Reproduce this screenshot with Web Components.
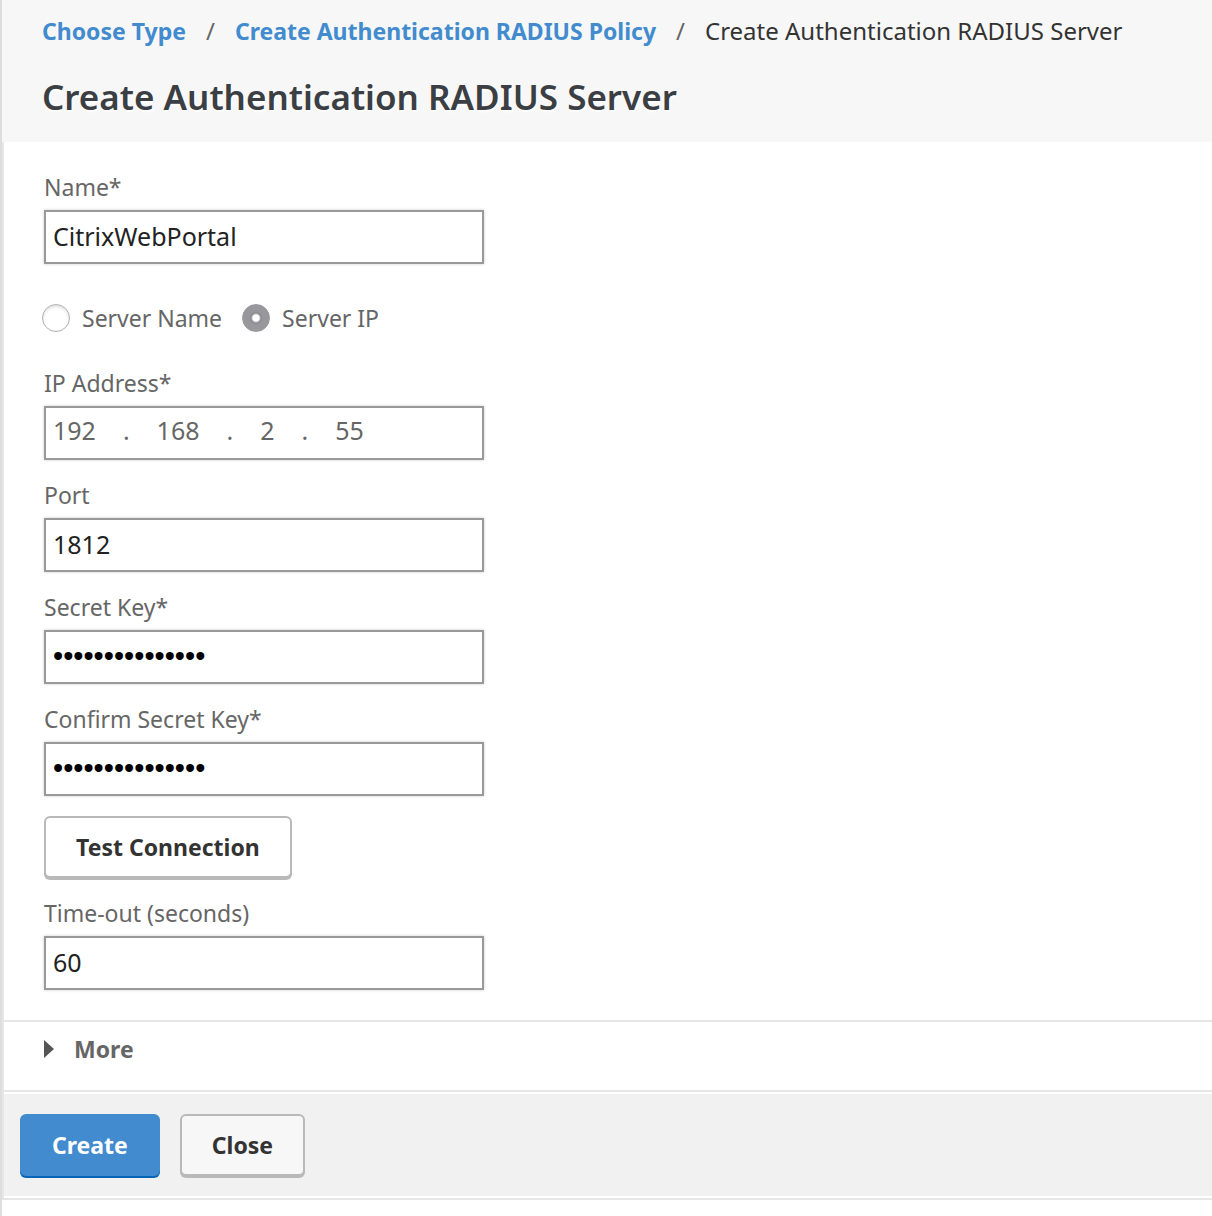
<!DOCTYPE html>
<html lang="en">
<head>
<meta charset="utf-8">
<meta name="viewport" content="width=device-width, initial-scale=1">
<title>Create Authentication RADIUS Server</title>
<style>
    body {
        margin: 0;
        background: #fff;
        color: #666;
        font: 23px/30px "Noto Sans", "Open Sans", sans-serif;
        --link: #418bce;
        --line: #e6e6e6;
        --edge: #999;
    }
</style>
</head>
<body>
<config-page>
    <page-header slot="header" heading="Create Authentication RADIUS Server">
        <a href="#type">Choose Type</a>
        <a href="#policy">Create Authentication RADIUS Policy</a>
        <span aria-current="page">Create Authentication RADIUS Server</span>
    </page-header>

    <text-field label="Name*" value="CitrixWebPortal"></text-field>
    <radio-choice name="server" options="Server Name,Server IP" value="Server IP"></radio-choice>
    <ip-field label="IP Address*" value="192.168.2.55"></ip-field>
    <text-field label="Port" value="1812"></text-field>
    <text-field label="Secret Key*" type="password" value="radiussecretkey"></text-field>
    <text-field label="Confirm Secret Key*" type="password" value="radiussecretkey"></text-field>
    <push-button>Test Connection</push-button>
    <text-field label="Time-out (seconds)" value="60"></text-field>

    <more-toggle slot="more">More</more-toggle>

    <push-button slot="actions" kind="primary">Create</push-button>
    <push-button slot="actions" kind="muted">Close</push-button>
</config-page>

<script>
    const controlStyles = `
        :host {
            display: block;
        }

        .label {
            display: block;
            margin-bottom: 8px;
        }

        .box {
            box-sizing: border-box;
            width: 100%;
            max-width: 440px;
            height: 54px;
            padding: 0 7px 2px;
            border: 2px solid var(--edge);
            border-radius: 0;
            background: #fff;
            box-shadow: 0 0 3px rgba(0, 0, 0, .2);
            color: #222;
            font: inherit;
            font-size: 25px;
        }

        .box[type="password"] {
            color: #000;
            font-family: "Liberation Sans", sans-serif;
            font-size: 29px;
        }

        input:focus-visible {
            outline: 2px solid var(--link);
        }
    `;

    class ConfigPage extends HTMLElement {
        constructor() {
            super();
            this.attachShadow({ mode: 'open' });
        }

        connectedCallback() {
            this.shadowRoot.innerHTML = `
                <style>
                    :host {
                        display: block;
                        box-sizing: border-box;
                        min-height: 100vh;
                        border-left: 2px solid #dedede;
                    }

                    main {
                        border-left: 2px solid var(--line);
                        border-bottom: 2px solid var(--line);
                    }

                    .fields {
                        display: flex;
                        flex-direction: column;
                        gap: 20px;
                        padding: 30px 40px;
                    }

                    .more {
                        padding: 12px 40px 26px;
                        border-block: 2px solid var(--line);
                    }

                    .actions {
                        display: flex;
                        gap: 20px;
                        margin-block: 2px;
                        padding: 20px 16px;
                        background: #f1f1f1;
                    }
                </style>
                <slot name="header"></slot>
                <main>
                    <div class="fields"><slot></slot></div>
                    <div class="more"><slot name="more"></slot></div>
                    <div class="actions"><slot name="actions"></slot></div>
                </main>
            `;
        }
    }

    class PageHeader extends HTMLElement {
        constructor() {
            super();
            this.attachShadow({ mode: 'open' });
        }

        connectedCallback() {
            this.shadowRoot.innerHTML = `
                <style>
                    :host {
                        display: block;
                        padding: 16px 40px 23px;
                        background: #f7f7f7;
                    }

                    nav {
                        display: flex;
                        flex-wrap: wrap;
                        align-items: baseline;
                        column-gap: 20px;
                        color: #333;
                        font-size: 24px;
                    }

                    ::slotted(a) {
                        color: var(--link);
                        font-size: 23px;
                        font-weight: 700;
                        text-decoration: none;
                    }

                    /* the divider belongs to every crumb but the first */
                    ::slotted(:not(:first-child))::before {
                        content: "/";
                        margin-right: 20px;
                        color: #666;
                        font-size: 24px;
                        font-weight: 400;
                    }

                    h1 {
                        margin: 29px 0 0;
                        color: #3b3f44;
                        font-size: 35px;
                        line-height: 44px;
                        font-weight: 600;
                        text-shadow: 1px 2px 2px #fff;
                    }
                </style>
                <nav aria-label="Breadcrumb"><slot></slot></nav>
                <h1></h1>
            `;
            this.shadowRoot.querySelector('h1').textContent = this.getAttribute('heading');
        }
    }

    class TextField extends HTMLElement {
        constructor() {
            super();
            this.attachShadow({ mode: 'open' });
        }

        connectedCallback() {
            this.shadowRoot.innerHTML = `
                <style>${controlStyles}</style>
                <label class="label" for="control"></label>
                <input class="box" id="control">
            `;
            const input = this.shadowRoot.querySelector('input');
            input.type = this.getAttribute('type') || 'text';
            input.value = this.getAttribute('value') || '';
            this.shadowRoot.querySelector('label').textContent = this.getAttribute('label');
        }
    }

    class IpField extends HTMLElement {
        constructor() {
            super();
            this.attachShadow({ mode: 'open' });
        }

        connectedCallback() {
            const octets = (this.getAttribute('value') || '...').split('.');
            this.shadowRoot.innerHTML = `
                <style>
                    ${controlStyles}

                    .octets {
                        display: flex;
                        align-items: center;
                        gap: 27px;
                        padding-bottom: 6px;
                        color: #666;
                    }

                    .octets input {
                        field-sizing: content;
                        padding: 0;
                        border: 0;
                        background: none;
                        color: inherit;
                        font: inherit;
                    }
                </style>
                <label class="label" for="octet-0"></label>
                <div class="box octets">
                    ${octets.map((_, i) => `<input id="octet-${i}" maxlength="3" aria-label="Octet ${i + 1}">`).join('<span>.</span>')}
                </div>
            `;
            this.shadowRoot.querySelectorAll('input').forEach((input, i) => {
                input.value = octets[i];
            });
            this.shadowRoot.querySelector('label').textContent = this.getAttribute('label');
        }
    }

    class RadioChoice extends HTMLElement {
        constructor() {
            super();
            this.attachShadow({ mode: 'open' });
        }

        connectedCallback() {
            this.shadowRoot.innerHTML = `
                <style>
                    :host {
                        display: flex;
                        flex-wrap: wrap;
                        gap: 20px;
                        padding: 20px 0 16px;
                        margin-left: -2px;
                        line-height: 28px;
                    }

                    label {
                        display: flex;
                        align-items: center;
                        gap: 12px;
                    }

                    input {
                        appearance: none;
                        box-sizing: border-box;
                        width: 28px;
                        height: 28px;
                        margin: 0;
                        border: 1px solid #b0b0b0;
                        border-radius: 50%;
                        background: #fff;
                        box-shadow: inset 0 2px 3px rgba(0, 0, 0, .12);
                    }

                    input:checked {
                        border-color: #98979c;
                        background: radial-gradient(circle, #fff 3px, #8b8a8f 5px, #98979c 7px);
                        box-shadow: none;
                    }
                </style>
            `;
            this.getAttribute('options').split(',').forEach((option) => {
                const label = document.createElement('label');
                const input = document.createElement('input');
                input.type = 'radio';
                input.name = this.getAttribute('name');
                input.value = option;
                input.checked = option === this.getAttribute('value');
                label.append(input, option);
                this.shadowRoot.append(label);
            });
        }
    }

    class PushButton extends HTMLElement {
        constructor() {
            super();
            this.attachShadow({ mode: 'open' });
        }

        connectedCallback() {
            this.shadowRoot.innerHTML = `
                <style>
                    :host {
                        display: block;
                    }

                    button {
                        display: block;
                        height: 62px;
                        padding: 0 30px;
                        border: 2px solid #b9b9b9;
                        border-radius: 6px;
                        background: #fff;
                        box-shadow: 0 2px 0 #b9b9b9;
                        color: #333;
                        font: inherit;
                        font-weight: 700;
                        cursor: pointer;
                    }

                    :host([kind="primary"]) button {
                        border-color: var(--link);
                        background: var(--link);
                        box-shadow: 0 2px 0 #0765b8;
                        color: #fff;
                    }

                    :host([kind="muted"]) button {
                        background: #f7f7f7;
                    }
                </style>
                <button type="button"><slot></slot></button>
            `;
        }
    }

    class MoreToggle extends HTMLElement {
        constructor() {
            super();
            this.attachShadow({ mode: 'open' });
        }

        connectedCallback() {
            this.shadowRoot.innerHTML = `
                <style>
                    :host {
                        display: block;
                    }

                    button {
                        display: flex;
                        align-items: center;
                        gap: 20px;
                        padding: 0;
                        border: 0;
                        background: none;
                        color: inherit;
                        font: inherit;
                        font-weight: 700;
                        cursor: pointer;
                    }
                </style>
                <button type="button" aria-expanded="false">
                    <svg width="10" height="18" viewBox="0 0 10 18" aria-hidden="true">
                        <path d="M0 0L10 9L0 18Z" fill="#555"/>
                    </svg>
                    <slot></slot>
                </button>
            `;
        }
    }

    customElements.define('config-page', ConfigPage);
    customElements.define('page-header', PageHeader);
    customElements.define('text-field', TextField);
    customElements.define('ip-field', IpField);
    customElements.define('radio-choice', RadioChoice);
    customElements.define('push-button', PushButton);
    customElements.define('more-toggle', MoreToggle);
</script>
</body>
</html>
